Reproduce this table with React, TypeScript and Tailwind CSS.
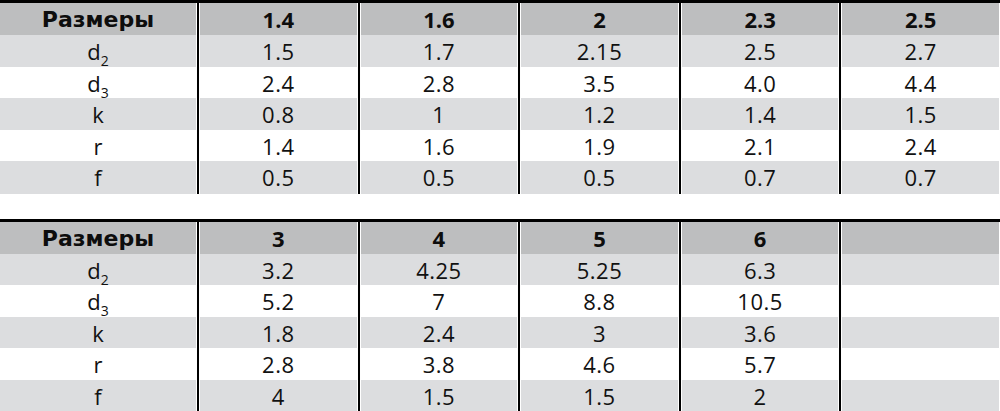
const sizes1 = ["1.4", "1.6", "2", "2.3", "2.5"];
const rows1 = [
  { label: "d", sub: "2", values: ["1.5", "1.7", "2.15", "2.5", "2.7"] },
  { label: "d", sub: "3", values: ["2.4", "2.8", "3.5", "4.0", "4.4"] },
  { label: "k", values: ["0.8", "1", "1.2", "1.4", "1.5"] },
  { label: "r", values: ["1.4", "1.6", "1.9", "2.1", "2.4"] },
  { label: "f", values: ["0.5", "0.5", "0.5", "0.7", "0.7"] },
];

const sizes2 = ["3", "4", "5", "6", ""];
const rows2 = [
  { label: "d", sub: "2", values: ["3.2", "4.25", "5.25", "6.3", ""] },
  { label: "d", sub: "3", values: ["5.2", "7", "8.8", "10.5", ""] },
  { label: "k", values: ["1.8", "2.4", "3", "3.6", ""] },
  { label: "r", values: ["2.8", "3.8", "4.6", "5.7", ""] },
  { label: "f", values: ["4", "1.5", "1.5", "2", ""] },
];

type Row = { label: string; sub?: string; values: string[] };

const Cell = ({
  first,
  shade,
  children,
}: {
  first?: boolean;
  shade: string;
  children?: React.ReactNode;
}) => (
  <div
    className={`bg-white ${first ? "pr-px" : "border-l-2 border-black px-px"}`}
  >
    <div className={`h-full flex items-center justify-center ${shade}`}>
      {children}
    </div>
  </div>
);

const SizeTable = ({ sizes, rows }: { sizes: string[]; rows: Row[] }) => (
  <div className="border-t-[3px] border-black">
    {/* Header */}
    <div className="grid grid-cols-[197px_repeat(5,1fr)] h-[31px] border-b-[3px] border-black">
      <Cell first shade="bg-[#bdbebf]">
        <span className="font-['DejaVu_Sans',sans-serif] font-bold text-[22px] text-[#0d0d0d]">
          Размеры
        </span>
      </Cell>
      {sizes.map((s, i) => (
        <Cell key={i} shade="bg-[#bdbebf]">
          <span className="font-['Open_Sans',sans-serif] font-bold text-[22px] text-[#0d0d0d]">
            {s}
          </span>
        </Cell>
      ))}
    </div>

    {/* Body */}
    <div className="pt-px">
      {rows.map((row, r) => {
        const shade = r % 2 === 0 ? "bg-[#dcdddf]" : "bg-white";
        return (
          <div
            key={r}
            className="grid grid-cols-[197px_repeat(5,1fr)] h-[31.5px] font-['Open_Sans',sans-serif] text-[22px] text-[#111]"
          >
            <Cell first shade={shade}>
              <span>
                {row.label}
                {row.sub && (
                  <span className="text-[14px] relative top-[6px]">
                    {row.sub}
                  </span>
                )}
              </span>
            </Cell>
            {row.values.map((v, i) => (
              <Cell key={i} shade={shade}>
                <span className="tracking-[0.5px]">{v}</span>
              </Cell>
            ))}
          </div>
        );
      })}
    </div>
  </div>
);

export default function App() {
  return (
    <div className="w-[1000px] h-[411px] bg-white overflow-hidden">
      <SizeTable sizes={sizes1} rows={rows1} />
      <div className="h-[26px]" />
      <SizeTable sizes={sizes2} rows={rows2} />
    </div>
  );
}
